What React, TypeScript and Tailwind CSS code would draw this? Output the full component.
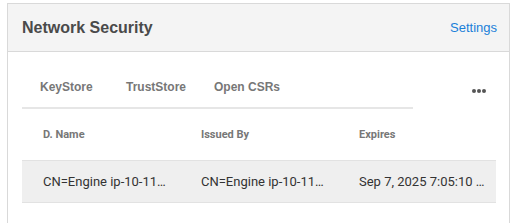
import React from 'react';

const tabs = [
  { label: 'KeyStore', w: 'w-[86px]' },
  { label: 'TrustStore', w: 'w-[88px]' },
  { label: 'Open CSRs', w: 'w-[90px]' },
];

const rows = [
  {
    name: 'CN=Engine ip-10-11…',
    issuedBy: 'CN=Engine ip-10-11…',
    expires: 'Sep 7, 2025 7:05:10 …',
  },
];

const App: React.FC = () => {
  return (
    <div className="w-[513px] h-[223px] overflow-hidden bg-white pt-[3px] pl-[7px] font-['Liberation_Sans',Arial,sans-serif]">
      <div className="w-[503px] h-[240px] border border-[#d9d9d9] bg-white">
        {/* header */}
        <div className="flex h-[48px] items-center justify-between border-b border-[#d9d9d9] bg-[#f4f4f4] pl-[14px] pr-[12px]">
          <h2 className="text-[16px] font-bold text-[#4a4a4a]">Network Security</h2>
          <a className="text-[13px] text-[#1a7fd9] cursor-pointer">Settings</a>
        </div>

        <div className="pl-[14px] pr-[12px] pt-[17px]">
          {/* tabs */}
          <div className="flex items-center">
            <div className="flex w-[391px] border-b-2 border-[#e6e6e6]">
              {tabs.map((t) => (
                <div
                  key={t.label}
                  className={`${t.w} pl-[18px] pt-[10px] pb-[12px] text-[12px] leading-[16px] font-bold text-[#777] whitespace-nowrap`}
                >
                  {t.label}
                </div>
              ))}
            </div>
            <div className="flex flex-1 justify-end pt-[3px] pr-[11px]">
              <div className="flex gap-[1px]">
                <span className="h-[4px] w-[4px] rounded-full bg-[#555]" />
                <span className="h-[4px] w-[4px] rounded-full bg-[#555]" />
                <span className="h-[4px] w-[4px] rounded-full bg-[#555]" />
              </div>
            </div>
          </div>

          {/* table */}
          <div className="w-[474px] font-['Roboto',sans-serif]">
            <div className="grid grid-cols-3 h-[51px] items-center text-[11px] font-bold text-[#777]">
              <div className="pl-[21px] pt-[1px]">D. Name</div>
              <div className="pl-[21px] pt-[1px]">Issued By</div>
              <div className="pl-[21px] pt-[1px]">Expires</div>
            </div>
            {rows.map((r, i) => (
              <div
                key={i}
                className="grid grid-cols-3 h-[43px] items-center border-y border-[#e2e2e2] bg-[#efefef] text-[13px] text-[#333]"
              >
                <div className="pl-[21px] truncate">{r.name}</div>
                <div className="pl-[21px] truncate">{r.issuedBy}</div>
                <div className="pl-[21px] truncate">{r.expires}</div>
              </div>
            ))}
          </div>
        </div>
      </div>
    </div>
  );
};

export default App;
